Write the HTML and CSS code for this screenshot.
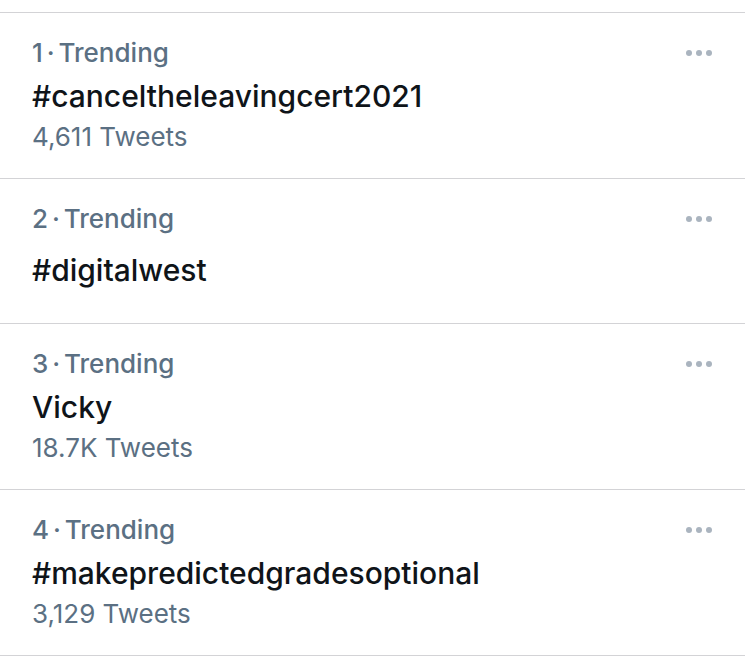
FILE: index.html
```html
<!DOCTYPE html>
<html>
<head>
<meta charset="utf-8">
<link rel="stylesheet" href="styles.css">
</head>
<body>
<ul class="trends">
  <li class="trend">
    <div class="trend-head">
      <span class="meta">1 · Trending</span>
      <span class="more"><i></i><i></i><i></i></span>
    </div>
    <div class="title">#canceltheleavingcert2021</div>
    <div class="count">4,611 Tweets</div>
  </li>
  <li class="trend trend-nocount">
    <div class="trend-head">
      <span class="meta">2 · Trending</span>
      <span class="more"><i></i><i></i><i></i></span>
    </div>
    <div class="title">#digitalwest</div>
  </li>
  <li class="trend">
    <div class="trend-head">
      <span class="meta">3 · Trending</span>
      <span class="more"><i></i><i></i><i></i></span>
    </div>
    <div class="title">Vicky</div>
    <div class="count">18.7K Tweets</div>
  </li>
  <li class="trend">
    <div class="trend-head">
      <span class="meta">4 · Trending</span>
      <span class="more"><i></i><i></i><i></i></span>
    </div>
    <div class="title">#makepredictedgradesoptional</div>
    <div class="count">3,129 Tweets</div>
  </li>
</ul>
</body>
</html>
```
FILE: styles.css
```css
html, body {
  margin: 0;
  padding: 0;
  background: #ffffff;
}
body {
  font-family: Inter, "Liberation Sans", sans-serif;
  -webkit-font-smoothing: antialiased;
}
.trends {
  list-style: none;
  margin: 12px 0 0 0;
  padding: 0;
  border-top: 1px solid #d3d3d6;
}
.trend {
  border-bottom: 1px solid #d3d3d6;
  padding: 20px 33px 21px 32px;
}
.trend-head {
  display: flex;
  align-items: center;
  justify-content: space-between;
  height: 40px;
}
.meta, .count {
  font-size: 26px;
  color: #5b7083;
  line-height: 40px;
  font-weight: 400;
}
.meta {
  font-weight: 500;
  word-spacing: -3px;
}
.title {
  margin-top: 4px;
  font-size: 30px;
  font-weight: 500;
  color: #0f1419;
  line-height: 38px;
  padding-bottom: 2px;
}
.trend-nocount {
  padding-bottom: 32px;
}
.trend-nocount .title {
  margin-top: 12px;
}
.more {
  display: flex;
  gap: 4px;
}
.more i {
  display: block;
  width: 6px;
  height: 6px;
  border-radius: 50%;
  background: #aab4bf;
}
```
